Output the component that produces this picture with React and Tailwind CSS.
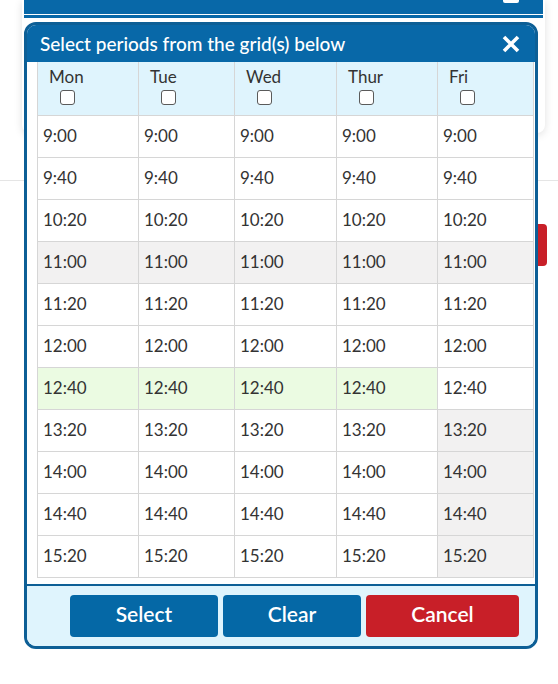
import React from 'react';

const days = ['Mon', 'Tue', 'Wed', 'Thur', 'Fri'];
const widths = ['w-[101px]', 'w-[96px]', 'w-[102px]', 'w-[101px]', 'w-[96px]'];
const times = ['9:00', '9:40', '10:20', '11:00', '11:20', '12:00', '12:40', '13:20', '14:00', '14:40', '15:20'];

// background colour of a cell, by time row and day column
const cellBg = (time, d) => {
  if (time === '11:00') return 'bg-[#f2f1f1]';
  if (time === '12:40') return d < 4 ? 'bg-[#ebfbe2]' : 'bg-white';
  if (d === 4 && ['13:20', '14:00', '14:40', '15:20'].includes(time)) return 'bg-[#f2f1f1]';
  return 'bg-white';
};

const PeriodModal = () => {
  return (
    <div className="absolute left-[24px] top-[22px] w-[514px] rounded-[12px] border-[3px] border-[#0d5f96] overflow-hidden bg-white">
      {/* Header */}
      <div className="h-[37px] bg-[#0868a8] flex items-center justify-between pl-[13px] pr-[15px]">
        <span className="text-white text-[19px] font-medium leading-none">Select periods from the grid(s) below</span>
        <svg width="18" height="18" viewBox="0 0 18 18">
          <path d="M2 2 L16 16 M16 2 L2 16" stroke="white" strokeWidth="3.6" />
        </svg>
      </div>

      {/* Grid */}
      <div className="pl-[10px] pr-[2px] pb-[6px]">
        <table className="border-collapse w-[496px] table-fixed">
          <thead>
            <tr>
              {days.map((day, i) => (
                <th key={day} className={`${widths[i]} h-[53px] bg-[#dff4fd] border border-[#d6d6d6] border-t-0 align-top text-left font-normal pl-[11px] pt-[5px]`}>
                  <div className="text-[17px] leading-[20px] text-[#333]">{day}</div>
                  <input
                    type="checkbox"
                    className="appearance-none block w-[15px] h-[15px] ml-[11px] mt-[3px] bg-white border border-[#5a5a5a] rounded-[3px]"
                  />
                </th>
              ))}
            </tr>
          </thead>
          <tbody>
            {times.map((time) => (
              <tr key={time}>
                {days.map((day, d) => (
                  <td key={day} className={`${cellBg(time, d)} h-[42px] border border-[#d6d6d6] pl-[5px] text-[17px] text-[#333]`}>
                    {time}
                  </td>
                ))}
              </tr>
            ))}
          </tbody>
        </table>
      </div>

      {/* Footer */}
      <div className="border-t-2 border-[#0d5f96] bg-[#dff4fd] flex justify-end gap-[5px] pt-[9px] pb-[9px] pr-[16px]">
        <button className="h-[42px] w-[148px] pb-[3px] rounded-[4px] bg-[#0568a6] text-white text-[21px] font-semibold">Select</button>
        <button className="h-[42px] w-[138px] pb-[3px] rounded-[4px] bg-[#0568a6] text-white text-[21px] font-semibold">Clear</button>
        <button className="h-[42px] w-[153px] pb-[3px] rounded-[4px] bg-[#c81f28] text-white text-[21px] font-semibold">Cancel</button>
      </div>
    </div>
  );
};

export default function App() {
  return (
    <div className="relative min-h-[684px] bg-white overflow-hidden" style={{ fontFamily: 'Lato, "Open Sans", sans-serif' }}>
      {/* Page behind the modal */}
      <div className="ml-[22px] w-[523px] h-[133px] rounded-b-[8px] bg-white shadow-[0_2px_8px_rgba(0,0,0,0.12)]">
        <div className="mx-[2px] h-[14px] bg-[#0868a8] flex justify-end pr-[24px]">
          <div className="w-[16px] h-[3px] bg-white rounded-b-[2px]"></div>
        </div>
        <div className="mx-[2px] mt-px h-[3px] bg-[#0868a8]"></div>
      </div>
      <div className="mt-[47px] border-t border-[#e5e5e5]"></div>
      <div className="mt-[43px] ml-[427px] w-[120px] h-[42px] rounded-[4px] bg-[#c81f28]"></div>

      <PeriodModal />
    </div>
  );
}
